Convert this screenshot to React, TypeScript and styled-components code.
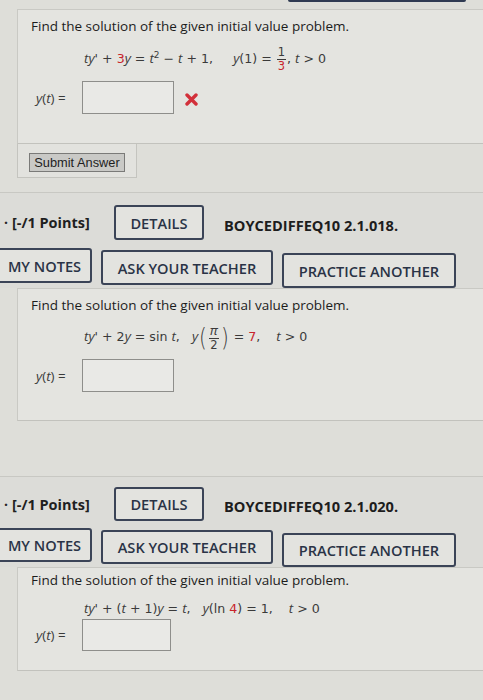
import React from "react";
import styled, { createGlobalStyle } from "styled-components";

const GlobalStyle = createGlobalStyle`
  body {
    margin: 0;
    background: #deded9;
    font-family: "Open Sans", "Noto Sans", sans-serif;
    color: #262626;
  }
`;

const Page = styled.div`
  width: 483px;
  height: 700px;
  overflow: hidden;
  background: #deded9;
`;

const TopEdge = styled.div`
  height: 9px;
  display: flex;
  padding-left: 288px;
`;

const NavyEdge = styled.div`
  width: 178px;
  height: 2px;
  background: #2f3a52;
  border-radius: 0 0 3px 3px;
`;

const QuestionPanel = styled.div<{ $top: number; $bottom: number }>`
  margin-left: 17px;
  padding: ${(p) => p.$top}px 0 ${(p) => p.$bottom}px 13px;
  background: #e4e4e0;
  border-top: 1px solid #c9c9c4;
  border-left: 1px solid #c9c9c4;
  border-bottom: 1px solid #c2c2bd;
`;

const Prompt = styled.p`
  margin: 0;
  font-size: 13.5px;
  font-weight: 500;
  line-height: 20px;
  color: #1c1c1c;
`;

const Equation = styled.div<{ $mt: number; $h: number }>`
  margin-top: ${(p) => p.$mt}px;
  height: ${(p) => p.$h}px;
  line-height: ${(p) => p.$h}px;
  padding-left: 53px;
  font-family: "DejaVu Sans", "Open Sans", sans-serif;
  font-size: 12.6px;
  color: #3a3a3a;
  white-space: pre;
`;

const V = styled.i`
  font-family: "Open Sans", sans-serif;
  font-size: 13.4px;
`;

const Sup = styled.sup`
  font-size: 9px;
  line-height: 0;
  vertical-align: 5px;
`;

const Red = styled.span`
  color: #c8242c;
`;

const Frac = styled.span`
  display: inline-flex;
  flex-direction: column;
  align-items: center;
  vertical-align: middle;
  font-size: 11.5px;
  line-height: 11px;
  margin: 0 1px;
`;

const FracTop = styled.span`
  padding: 0 1px 1px;
  border-bottom: 1px solid #3a3a3a;
`;

const FracBottom = styled.span`
  padding-top: 1px;
`;

const BigParen = styled.span`
  display: inline-block;
  vertical-align: middle;
  font-size: 25px;
  font-weight: 200;
  line-height: 26px;
  transform: scaleX(0.8);
`;

const AnswerRow = styled.div<{ $mt: number }>`
  margin-top: ${(p) => p.$mt}px;
  display: flex;
  align-items: center;
`;

const AnswerLabel = styled.span`
  width: 46px;
  padding-left: 5px;
  font-size: 13.4px;
  color: #3a3a3a;
  font-family: "Open Sans", sans-serif;
`;

const AnswerInput = styled.div<{ $w: number; $h: number }>`
  width: ${(p) => p.$w}px;
  height: ${(p) => p.$h}px;
  background: #e9e9e6;
  border: 1px solid #8e8e8b;
  box-sizing: border-box;
`;

const WrongMark = styled.svg`
  margin-left: 11px;
  margin-top: 4px;
`;

const SubmitBox = styled.div`
  margin-left: 17px;
  width: 120px;
  height: 34px;
  box-sizing: border-box;
  padding: 6px 0 0 11px;
  background: #e2e2de;
  border: 1px solid #c4c4bf;
  border-top: none;
`;

const SubmitButton = styled.button`
  height: 19px;
  width: 96px;
  padding: 0;
  background: #c9c9c6;
  border: 1px solid #7a7a78;
  border-radius: 0;
  font-family: "Liberation Sans", Arial, sans-serif;
  font-size: 12.8px;
  color: #1e1e1e;
`;

const HeaderBand = styled.div<{ $mt: number; $pt: number }>`
  margin-top: ${(p) => p.$mt}px;
  padding-top: ${(p) => p.$pt}px;
  border-top: 1px solid #c8c8c3;
  background: #dcdcd8;
`;

const PointsRow = styled.div`
  display: flex;
  align-items: center;
  padding-left: 4px;
`;

const Bullet = styled.span`
  width: 8px;
  font-weight: 700;
  font-size: 14px;
`;

const Points = styled.span`
  font-weight: 700;
  font-size: 14.5px;
  width: 102px;
  color: #1f1f1f;
`;

const Code = styled.span`
  margin-left: 20px;
  font-weight: 700;
  font-size: 14.6px;
  color: #1d1d1d;
  padding-top: 4px;
`;

const OutlineButton = styled.button<{ $w: number; $h: number }>`
  width: ${(p) => p.$w}px;
  height: ${(p) => p.$h}px;
  padding: 0;
  background: #e3e3df;
  border: 2px solid #3b4457;
  border-radius: 3px;
  font-family: "Open Sans", sans-serif;
  font-size: 14.6px;
  font-weight: 600;
  color: #2a3346;
  flex-shrink: 0;
`;

const ActionRow = styled.div<{ $mt: number }>`
  margin-top: ${(p) => p.$mt}px;
  margin-left: -3px;
  display: flex;
  gap: 9px;
  align-items: flex-start;
`;

const Shifted = styled.div<{ $dy: number }>`
  margin-top: ${(p) => p.$dy}px;
`;

const Mark = () => (
  <WrongMark width="13" height="13" viewBox="0 0 13 13">
    <path d="M2 2 L11 11 M11 2 L2 11" stroke="#d2303a" strokeWidth="3.4" strokeLinecap="round" />
  </WrongMark>
);

type HeaderProps = { code: string; mt: number; pt: number; rowGap: number; h: number };

const ProblemHeader = ({ code, mt, pt, rowGap, h }: HeaderProps) => (
  <HeaderBand $mt={mt} $pt={pt}>
    <PointsRow>
      <Bullet>·</Bullet>
      <Points>[-/1 Points]</Points>
      <OutlineButton $w={90} $h={h}>DETAILS</OutlineButton>
      <Code>{code}</Code>
    </PointsRow>
    <ActionRow $mt={rowGap}>
      <OutlineButton $w={95} $h={h}>MY NOTES</OutlineButton>
      <Shifted $dy={2}>
        <OutlineButton $w={172} $h={h}>ASK YOUR TEACHER</OutlineButton>
      </Shifted>
      <Shifted $dy={5}>
        <OutlineButton $w={174} $h={h}>PRACTICE ANOTHER</OutlineButton>
      </Shifted>
    </ActionRow>
  </HeaderBand>
);

const PROMPT = "Find the solution of the given initial value problem.";

export default function App() {
  return (
    <Page>
      <GlobalStyle />
      <TopEdge>
        <NavyEdge />
      </TopEdge>

      <QuestionPanel $top={6} $bottom={29}>
        <Prompt>{PROMPT}</Prompt>
        <Equation $mt={10} $h={24}>
          <V>ty</V>' + <Red>3</Red>
          <V>y</V> = <V>t</V>
          <Sup>2</Sup> − <V>t</V> + 1,{"     "}
          <V>y</V>(1) ={" "}
          <Frac>
            <FracTop>1</FracTop>
            <FracBottom>
              <Red>3</Red>
            </FracBottom>
          </Frac>
          , <V>t</V> &gt; 0
        </Equation>
        <AnswerRow $mt={11}>
          <AnswerLabel>
            <V>y</V>(<V>t</V>) =
          </AnswerLabel>
          <AnswerInput $w={92} $h={33} />
          <Mark />
        </AnswerRow>
      </QuestionPanel>
      <SubmitBox>
        <SubmitButton>Submit Answer</SubmitButton>
      </SubmitBox>

      <ProblemHeader code="BOYCEDIFFEQ10 2.1.018." mt={14} pt={12} rowGap={8} h={35} />

      <QuestionPanel $top={6} $bottom={28}>
        <Prompt>{PROMPT}</Prompt>
        <Equation $mt={6} $h={30}>
          <V>ty</V>' + 2<V>y</V> = sin <V>t</V>,{"   "}
          <V>y</V>
          <BigParen>(</BigParen>
          <Frac>
            <FracTop>
              <V>π</V>
            </FracTop>
            <FracBottom>2</FracBottom>
          </Frac>
          <BigParen>)</BigParen> = <Red>7</Red>,{"    "}
          <V>t</V> &gt; 0
        </Equation>
        <AnswerRow $mt={8}>
          <AnswerLabel>
            <V>y</V>(<V>t</V>) =
          </AnswerLabel>
          <AnswerInput $w={92} $h={33} />
        </AnswerRow>
      </QuestionPanel>

      <ProblemHeader code="BOYCEDIFFEQ10 2.1.020." mt={55} pt={10} rowGap={7} h={34} />

      <QuestionPanel $top={2} $bottom={19}>
        <Prompt>{PROMPT}</Prompt>
        <Equation $mt={8} $h={20}>
          <V>ty</V>' + (<V>t</V> + 1)<V>y</V> = <V>t</V>,{"   "}
          <V>y</V>(ln <Red>4</Red>) = 1,{"    "}
          <V>t</V> &gt; 0
        </Equation>
        <AnswerRow $mt={1}>
          <AnswerLabel>
            <V>y</V>(<V>t</V>) =
          </AnswerLabel>
          <AnswerInput $w={89} $h={32} />
        </AnswerRow>
      </QuestionPanel>
    </Page>
  );
}
